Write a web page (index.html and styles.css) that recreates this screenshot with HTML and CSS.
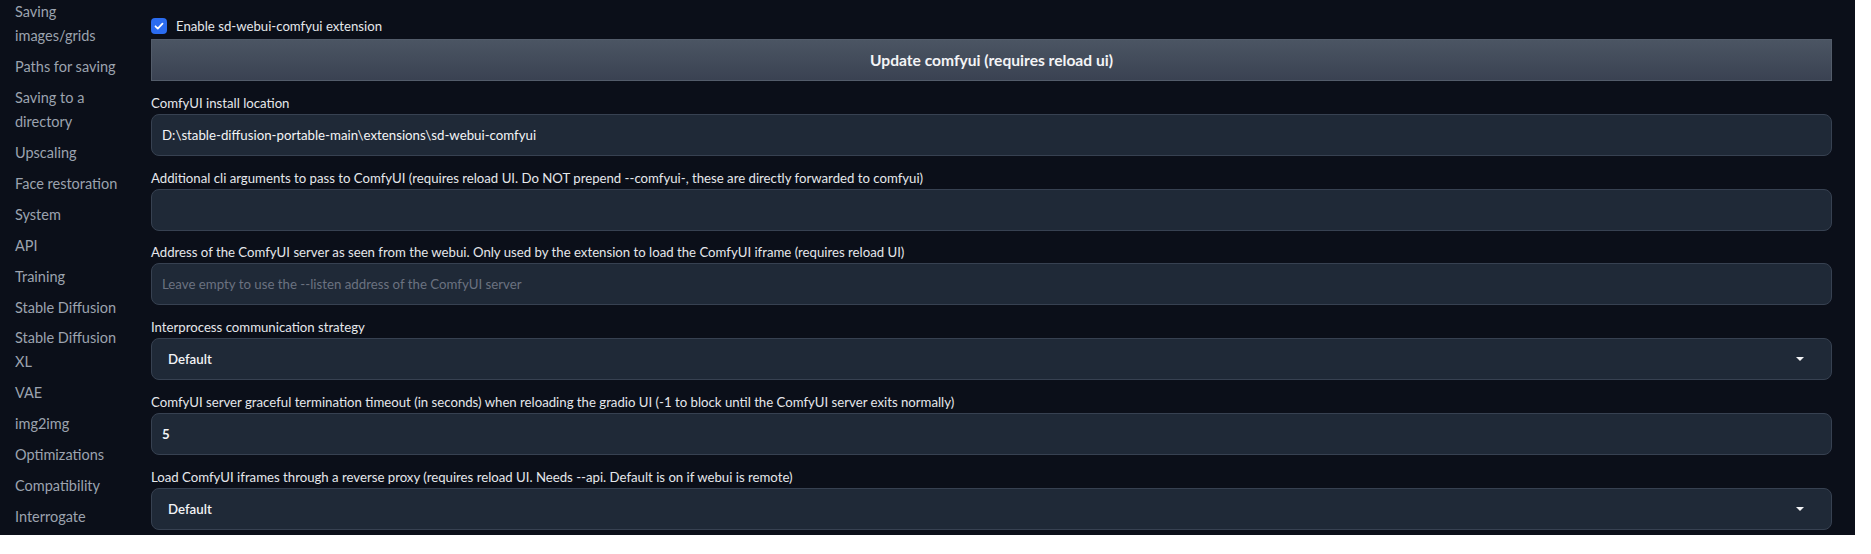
FILE: index.html
```html
<!DOCTYPE html>
<html>
<head>
<meta charset="utf-8">
<link rel="stylesheet" href="styles.css">
</head>
<body>
<div class="app">
  <nav class="sidebar">
    <div class="nav-item">Saving images/grids</div>
    <div class="nav-item">Paths for saving</div>
    <div class="nav-item">Saving to a directory</div>
    <div class="nav-item">Upscaling</div>
    <div class="nav-item">Face restoration</div>
    <div class="nav-item">System</div>
    <div class="nav-item">API</div>
    <div class="nav-item">Training</div>
    <div class="nav-item">Stable Diffusion</div>
    <div class="nav-item">Stable Diffusion XL</div>
    <div class="nav-item">VAE</div>
    <div class="nav-item">img2img</div>
    <div class="nav-item">Optimizations</div>
    <div class="nav-item">Compatibility</div>
    <div class="nav-item">Interrogate</div>
  </nav>
  <main class="main">
    <label class="check-row">
      <span class="checkbox">
        <svg viewBox="0 0 16 16" width="16" height="16"><path d="M4.5 8.3l2.3 2.3 4.7-4.9" fill="none" stroke="#fff" stroke-width="1.8" stroke-linecap="round" stroke-linejoin="round"/></svg>
      </span>
      <span class="check-label">Enable sd-webui-comfyui extension</span>
    </label>
    <button class="btn">Update comfyui (requires reload ui)</button>

    <div class="field">
      <div class="field-label">ComfyUI install location</div>
      <div class="box"><span class="value">D:\stable-diffusion-portable-main\extensions\sd-webui-comfyui</span></div>
    </div>
    <div class="field">
      <div class="field-label">Additional cli arguments to pass to ComfyUI (requires reload UI. Do NOT prepend --comfyui-, these are directly forwarded to comfyui)</div>
      <div class="box"></div>
    </div>
    <div class="field">
      <div class="field-label">Address of the ComfyUI server as seen from the webui. Only used by the extension to load the ComfyUI iframe (requires reload UI)</div>
      <div class="box"><span class="placeholder">Leave empty to use the --listen address of the ComfyUI server</span></div>
    </div>
    <div class="field">
      <div class="field-label">Interprocess communication strategy</div>
      <div class="box select"><span class="sel-value">Default</span><span class="caret"></span></div>
    </div>
    <div class="field">
      <div class="field-label">ComfyUI server graceful termination timeout (in seconds) when reloading the gradio UI (-1 to block until the ComfyUI server exits normally)</div>
      <div class="box"><span class="value bold">5</span></div>
    </div>
    <div class="field">
      <div class="field-label">Load ComfyUI iframes through a reverse proxy (requires reload UI. Needs --api. Default is on if webui is remote)</div>
      <div class="box select"><span class="sel-value">Default</span><span class="caret"></span></div>
    </div>
  </main>
</div>
</body>
</html>
```

FILE: styles.css
```css
* { box-sizing: border-box; }
html, body { margin: 0; padding: 0; background: #ffffff; }
body { font-family: Lato, "Noto Sans", sans-serif; }

.app {
  width: 1855px;
  height: 535px;
  background: #0b0f19;
  display: flex;
  overflow: hidden;
}

.sidebar {
  width: 151px;
  flex: none;
  padding: 0 18px 0 15px;
  color: #9ca3af;
  font-size: 14.5px;
  line-height: 24px;
}
.nav-item { margin-bottom: 6.95px; }

.main {
  width: 1681px;
  flex: none;
  padding-top: 18px;
  display: flex;
  flex-direction: column;
}

.check-row {
  display: flex;
  align-items: center;
  height: 16px;
  gap: 9px;
}
.checkbox {
  width: 16px;
  height: 16px;
  border-radius: 4px;
  background: #2b6cf0;
  display: flex;
}
.check-label {
  color: #e5e7eb;
  font-size: 13.2px;
}

.btn {
  margin-top: 5px;
  height: 42px;
  width: 100%;
  border: 1px solid #535c6a;
  border-radius: 0;
  background: linear-gradient(to bottom, #4b5563, #3a4252);
  color: #f3f4f6;
  font-family: inherit;
  font-weight: 700;
  font-size: 15.6px;
  padding: 0;
}

.field { margin-top: 12.8px; }
.field-label {
  color: #e5e7eb;
  font-size: 13.2px;
  line-height: 18px;
  margin-bottom: 2px;
  white-space: nowrap;
}
.box {
  height: 42px;
  background: #1f2937;
  border: 1px solid #374151;
  border-radius: 8px;
  display: flex;
  align-items: center;
  padding: 0 10px;
  font-size: 13.25px;
  color: #f3f4f6;
}
.value.bold { font-weight: 700; }
.placeholder { color: #6b7280; }
.select { padding: 0 27px 0 16px; justify-content: space-between; }
.sel-value { font-weight: 600; }
.caret {
  width: 0;
  height: 0;
  border-left: 4px solid transparent;
  border-right: 4px solid transparent;
  border-top: 4px solid #f3f4f6;
}
```
